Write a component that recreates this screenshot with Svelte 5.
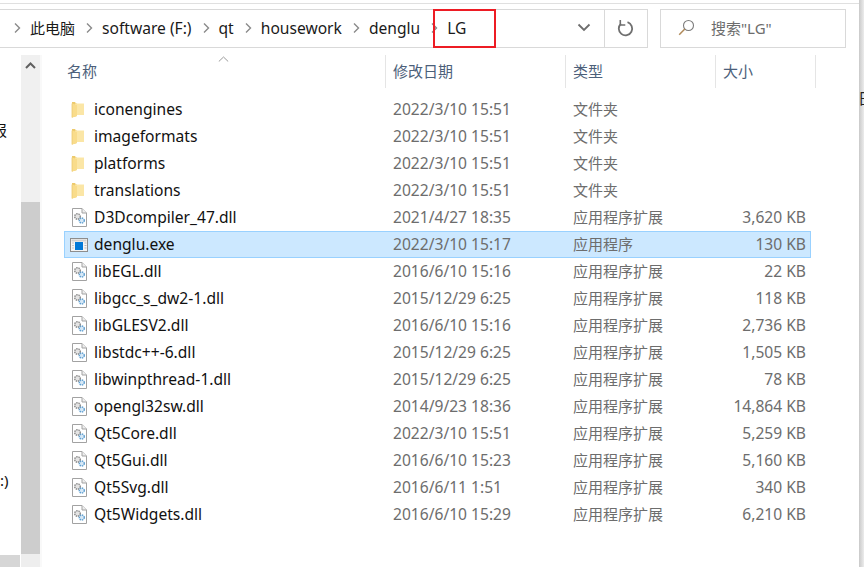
<script lang="ts">
  const crumbs = ['此电脑', 'software (F:)', 'qt', 'housework', 'denglu', 'LG'];
  const columns = [
    { label: '名称', width: 343 },
    { label: '修改日期', width: 180 },
    { label: '类型', width: 150 },
    { label: '大小', width: 100 }
  ];
  const files = [
    { name: 'iconengines', date: '2022/3/10 15:51', type: '文件夹', size: '', icon: 'folder' },
    { name: 'imageformats', date: '2022/3/10 15:51', type: '文件夹', size: '', icon: 'folder' },
    { name: 'platforms', date: '2022/3/10 15:51', type: '文件夹', size: '', icon: 'folder' },
    { name: 'translations', date: '2022/3/10 15:51', type: '文件夹', size: '', icon: 'folder' },
    { name: 'D3Dcompiler_47.dll', date: '2021/4/27 18:35', type: '应用程序扩展', size: '3,620 KB', icon: 'dll' },
    { name: 'denglu.exe', date: '2022/3/10 15:17', type: '应用程序', size: '130 KB', icon: 'exe', selected: true },
    { name: 'libEGL.dll', date: '2016/6/10 15:16', type: '应用程序扩展', size: '22 KB', icon: 'dll' },
    { name: 'libgcc_s_dw2-1.dll', date: '2015/12/29 6:25', type: '应用程序扩展', size: '118 KB', icon: 'dll' },
    { name: 'libGLESV2.dll', date: '2016/6/10 15:16', type: '应用程序扩展', size: '2,736 KB', icon: 'dll' },
    { name: 'libstdc++-6.dll', date: '2015/12/29 6:25', type: '应用程序扩展', size: '1,505 KB', icon: 'dll' },
    { name: 'libwinpthread-1.dll', date: '2015/12/29 6:25', type: '应用程序扩展', size: '78 KB', icon: 'dll' },
    { name: 'opengl32sw.dll', date: '2014/9/23 18:36', type: '应用程序扩展', size: '14,864 KB', icon: 'dll' },
    { name: 'Qt5Core.dll', date: '2022/3/10 15:51', type: '应用程序扩展', size: '5,259 KB', icon: 'dll' },
    { name: 'Qt5Gui.dll', date: '2016/6/10 15:23', type: '应用程序扩展', size: '5,160 KB', icon: 'dll' },
    { name: 'Qt5Svg.dll', date: '2016/6/11 1:51', type: '应用程序扩展', size: '340 KB', icon: 'dll' },
    { name: 'Qt5Widgets.dll', date: '2016/6/10 15:29', type: '应用程序扩展', size: '6,210 KB', icon: 'dll' }
  ];
</script>

<div class="window">
  <div class="topline"></div>

  <div class="toolbar">
    <div class="address">
      {#each crumbs as crumb, i}
        <svg class="sep" width="8" height="12" viewBox="0 0 8 12"><path d="M2 1.500 6.500 6 2 10.500" fill="none" stroke="#8a8a8a" stroke-width="1.400" /></svg>
        <span class="crumb" class:cjk={i === 0}>{crumb}</span>
      {/each}
      <svg class="drop" width="14" height="9" viewBox="0 0 14 9"><path d="M1.500 1.500 7 7l5.500-5.500" fill="none" stroke="#6d6d6d" stroke-width="1.800" /></svg>
    </div>
    <div class="refresh">
      <svg width="18" height="18" viewBox="0 0 18 18"><path d="M10.500 3.200A6.700 6.700 0 1 1 4 4.600" fill="none" stroke="#6f6f6f" stroke-width="1.800" /><path d="M3.300 1v5h5" fill="none" stroke="#6f6f6f" stroke-width="1.600" /></svg>
    </div>
    <div class="search">
      <svg width="17" height="17" viewBox="0 0 17 17"><circle cx="10.500" cy="6.500" r="5" fill="none" stroke="#7c7c7c" stroke-width="1.100" /><path d="M6.800 10 1.200 15.800" stroke="#b08a5a" stroke-width="1.500" /></svg>
      <span>搜索"LG"</span>
    </div>
  </div>

  <div class="main">
    <div class="nav">
      <span class="cut first">报</span>
      <span class="cut second">:)</span>
      <div class="hthumb"></div>
    </div>

    <div class="vscroll">
      <div class="track">
        <svg width="11" height="7" viewBox="0 0 11 7"><path d="M1 6 5.500 1.500 10 6" fill="none" stroke="#606060" stroke-width="2" /></svg>
      </div>
      <div class="thumb"></div>
      <div class="track-end"></div>
    </div>

    <div class="list">
      <div class="header">
        {#each columns as col}
          <div class="head" style="width: {col.width}px">{col.label}</div>
        {/each}
        <svg class="caret" width="11" height="6" viewBox="0 0 11 6"><path d="M.8 5.500 5.500 1l4.700 4.500" fill="none" stroke="#9a9a9a" stroke-width="1" /></svg>
      </div>

      <div class="rows">
        {#each files as file}
          <div class="row" class:selected={file.selected}>
            <div class="icon">
              {#if file.icon === 'folder'}
                <svg class="folder" width="14" height="17" viewBox="0 0 14 17">
                  <path d="M1 1h3l1 1.500h1V15l-5 1.500z" fill="#edca6c" />
                  <path d="M4 2.500h9v11.500H4z" fill="#fbe6a6" />
                  <path d="M1 2.500 6 4v11l-5 1.500z" fill="#f9dc8b" />
                  <path d="M1 16.500V2.500" stroke="#ecc971" stroke-width=".8" />
                </svg>
              {:else if file.icon === 'dll'}
                <svg width="15" height="19" viewBox="0 0 15 19">
                  <path d="M.5.500h9.500l4.500 4.500v13.500H.5z" fill="#fff" stroke="#a2a2a2" />
                  <path d="M10 .500V5h4.500" fill="#eee" stroke="#a2a2a2" />
                  <circle cx="5.500" cy="8.500" r="2.800" fill="#e4e4e4" stroke="#8f8f8f" stroke-width="1.500" stroke-dasharray="1.500 .8" />
                  <circle cx="9.800" cy="12.500" r="2.500" fill="#d7e8f6" stroke="#5f9fd0" stroke-width="1.400" stroke-dasharray="1.500 .8" />
                </svg>
              {:else}
                <svg width="18" height="14" viewBox="0 0 18 14">
                  <rect x=".5" y=".5" width="17" height="13" fill="#f4f4f4" stroke="#8d8d8d" />
                  <rect x="1.500" y="1.500" width="15" height="2" fill="#d0d0d0" />
                  <rect x="5" y="4" width="8" height="8" fill="#0078d7" />
                  <path d="M14.500 5h2M14.500 7.500h2M14.500 10h2" stroke="#b9b9b9" />
                  <path d="M2 5h2M2 7.500h2M2 10h2" stroke="#c9c9c9" />
                </svg>
              {/if}
            </div>
            <div class="name">{file.name}</div>
            <div class="date">{file.date}</div>
            <div class="type">{file.type}</div>
            <div class="size">{file.size}</div>
          </div>
        {/each}
      </div>
    </div>

    <div class="edge">
      <span class="peek">日</span>
    </div>
  </div>

  <!-- red annotation drawn over the screenshot -->
  <div class="mark"></div>
</div>

<style>
  :global(body) {
    margin: 0;
    background: #fff;
  }

  .window {
    position: relative;
    width: 864px;
    height: 567px;
    overflow: hidden;
    background: #fff;
    font-family: "Noto Sans", "Noto Sans CJK SC", sans-serif;
    font-size: 15px;
  }

  .topline {
    height: 1px;
    margin-top: 3px;
    margin-right: 5px;
    background: #e0e0e0;
  }

  .toolbar {
    display: flex;
    height: 39px;
    margin-top: 5px;
  }

  .address {
    display: flex;
    align-items: center;
    width: 605px;
    box-sizing: border-box;
    padding-left: 3px;
    padding-bottom: 2px;
    border: 1px solid #d9d9d9;
    border-left: none;
    color: #1a1a1a;
  }

  .sep {
    margin-left: 10px;
    margin-right: 9px;
    flex: none;
  }

  .crumb {
    font-size: 15.6px;
    white-space: nowrap;
  }

  .crumb.cjk {
    font-size: 15px;
  }

  .drop {
    margin-left: auto;
    margin-right: 13px;
  }

  .refresh {
    display: flex;
    align-items: center;
    justify-content: center;
    width: 43px;
    box-sizing: border-box;
    padding-bottom: 2px;
    border: 1px solid #d9d9d9;
    border-left: none;
  }

  .search {
    display: flex;
    align-items: center;
    gap: 16px;
    width: 186px;
    box-sizing: border-box;
    margin-left: 12px;
    padding-left: 17px;
    padding-bottom: 2px;
    border: 1px solid #d9d9d9;
    color: #6d6d6d;
  }

  .main {
    display: flex;
    height: 512px;
    margin-top: 7px;
  }

  .nav {
    display: flex;
    flex-direction: column;
    width: 21px;
    flex: none;
    overflow: hidden;
    color: #111;
    line-height: 20px;
  }

  .cut {
    white-space: nowrap;
  }

  .first {
    margin-left: -8px;
    margin-top: 65px;
  }

  .second {
    margin-left: 0;
    margin-top: 330px;
  }

  .hthumb {
    height: 12px;
    width: 20px;
    margin-top: auto;
    background: #d6d6d6;
  }

  .vscroll {
    display: flex;
    flex-direction: column;
    width: 19px;
    flex: none;
    margin-right: 3px;
    background: #f0f0f0;
    box-shadow: 2px 0 0 #f9f9f9;
  }

  .track {
    height: 147px;
    display: flex;
    justify-content: center;
    padding-top: 7px;
    box-sizing: border-box;
  }

  .thumb {
    height: 352px;
    background: #cdcdcd;
  }

  .track-end {
    flex: 1;
    background: #eeeeee;
  }

  .list {
    width: 816px;
    flex: none;
  }

  .header {
    position: relative;
    display: flex;
    height: 33px;
  }

  .head {
    box-sizing: border-box;
    padding-left: 24px;
    height: 33px;
    line-height: 33px;
    border-right: 1px solid #e5e5e5;
    color: #4c607a;
  }

  .head + .head {
    padding-left: 7px;
  }

  .caret {
    position: absolute;
    left: 175px;
    top: 1px;
  }

  .rows {
    padding-top: 8px;
  }

  .row {
    display: flex;
    align-items: center;
    box-sizing: border-box;
    height: 27px;
    margin-left: 21px;
    width: 747px;
    border: 1px solid transparent;
    color: #6d6d6d;
    font-size: 15.6px;
    white-space: nowrap;
  }

  .row.selected {
    background: #cce8ff;
    border-color: #99d1ff;
  }

  .icon {
    display: flex;
    justify-content: center;
    width: 28px;
    flex: none;
  }

  .folder {
    margin-left: -2px;
  }

  .name,
  .date,
  .type,
  .size {
    padding-bottom: 2px;
  }

  .name {
    width: 299px;
    margin-left: 1px;
    color: #111;
  }

  .date {
    width: 180px;
  }

  .type {
    width: 150px;
    font-size: 15px;
  }

  .size {
    width: 83px;
    text-align: right;
  }

  .edge {
    flex: 1;
    overflow: hidden;
    margin-top: -55px;
    background: linear-gradient(to right, #c9c9c9, #ececec);
  }

  .peek {
    display: block;
    margin-top: 87px;
    margin-left: -1px;
    color: #222;
  }

  .mark {
    position: absolute;
    left: 433px;
    top: 9px;
    width: 63px;
    height: 39px;
    box-sizing: border-box;
    border: 2px solid #ed1c24;
  }
</style>
